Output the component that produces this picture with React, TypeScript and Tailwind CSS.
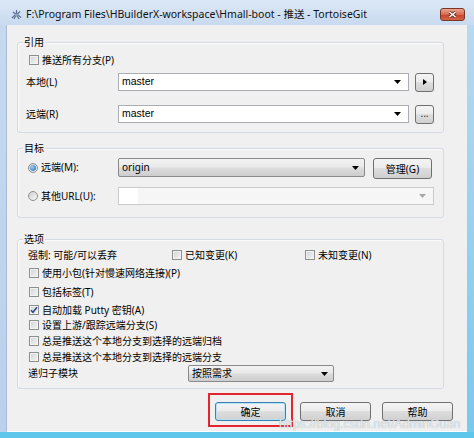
import React from "react";

const btnBase =
  "flex items-center justify-center rounded-[3px] border leading-[12px] bg-[linear-gradient(to_bottom,#f4f4f4_0%,#ececec_45%,#dedede_50%,#d0d0d0_100%)]";

function Arrow({ color = "#000" }: { color?: string }) {
  return (
    <svg width="7" height="4" viewBox="0 0 7 4">
      <path d="M0 0H7L3.5 4Z" fill={color} />
    </svg>
  );
}

function CheckBox({ checked = false }: { checked?: boolean }) {
  return (
    <span className="flex h-[10px] w-[10px] shrink-0 items-center justify-center border border-[#8e8f8f] bg-[linear-gradient(135deg,#cfd1d3,#f6f6f6)] shadow-[inset_0_0_0_1px_#f2f2f2]">
      {checked && (
        <svg width="8" height="8" viewBox="0 0 8 8">
          <path d="M1 4.2 3 6.3 7 1.3" fill="none" stroke="#2f4c8c" strokeWidth="1.6" />
        </svg>
      )}
    </span>
  );
}

function Radio({ checked = false }: { checked?: boolean }) {
  return (
    <span className="flex h-[10px] w-[10px] shrink-0 items-center justify-center rounded-full border border-[#8e8f8f] bg-[linear-gradient(135deg,#cdcfd1,#f8f8f8)]">
      {checked && (
        <span className="h-[6px] w-[6px] rounded-full bg-[radial-gradient(circle_at_35%_35%,#9fd2f6,#1f62b0)]" />
      )}
    </span>
  );
}

function Group({ title, className, children }: { title: string; className: string; children: React.ReactNode }) {
  return (
    <div className={"ml-[10px] w-[427px] rounded-[3px] border border-[#d5dbe0] shadow-[inset_1px_1px_0_#fbfbfb] " + className}>
      <div className="-mt-[8px] ml-[5px] h-[14px] w-fit bg-[#f0f0f0] px-[1px] leading-[14px]">{title}</div>
      {children}
    </div>
  );
}

function CheckRow({ label, checked = false, className }: { label: string; checked?: boolean; className: string }) {
  return (
    <div className={"flex h-[14px] items-center gap-[3px] pl-[11px] " + className}>
      <CheckBox checked={checked} />
      <span>{label}</span>
    </div>
  );
}

function EditCombo({ value, width }: { value: string; width: string }) {
  return (
    <div className={"flex h-[18px] items-center border border-[#abadb3] bg-white pl-[3px] pr-[7px] " + width}>
      <span className="flex-1 font-['Liberation_Sans',sans-serif] text-[10.5px]">{value}</span>
      <Arrow />
    </div>
  );
}

function ListCombo({ value, width, height }: { value: string; width: string; height: string }) {
  return (
    <div
      className={
        "flex items-center rounded-[2px] border border-[#8a8a8a] bg-[linear-gradient(to_bottom,#f3f3f3_0%,#e9e9e9_45%,#dcdcdc_55%,#cdcdcd_100%)] pl-[3px] pr-[5px] " +
        width +
        " " +
        height
      }
    >
      <span className="flex-1">{value}</span>
      <Arrow />
    </div>
  );
}

export default function App() {
  return (
    <div className="relative flex h-[438px] w-[474px] flex-col overflow-hidden bg-[#c4d7ee] font-['Noto_Sans','Noto_Sans_CJK_SC',sans-serif] text-[10px] text-black">
      {/* title bar */}
      <div className="flex h-[25px] items-center bg-[linear-gradient(to_bottom,#dce8f6,#c8daef)] pl-[10px] pt-[4px]">
        <svg width="13" height="11" viewBox="0 0 13 11" className="mr-[3px]">
          <path d="M2 9 5 6M4 10 6 6.5M7 6.5 9 10M8 6 11 8.5M6.5 5.5V1M3 3l3 2.5M10 2.5 7 5.5" stroke="#5a6f8e" strokeWidth="1.2" fill="none" />
          <circle cx="6.5" cy="6" r="1.6" fill="#8aa2c4" />
        </svg>
        <span className="text-[10.5px] text-[#111]">F:\Program Files\HBuilderX-workspace\Hmall-boot - 推送 - TortoiseGit</span>
        <div className="ml-auto mr-[9px] flex h-[13px] w-[25px] items-center justify-center rounded-[3px] border border-[#7c3424] bg-[linear-gradient(to_bottom,#eaa592_0%,#d86a50_50%,#c8452c_55%,#d4664a_100%)]">
          <svg width="9" height="7" viewBox="0 0 9 7">
            <path d="M1.5 1 7.5 6M7.5 1 1.5 6" stroke="#5a2418" strokeWidth="3" />
            <path d="M1.5 1 7.5 6M7.5 1 1.5 6" stroke="#fff" strokeWidth="1.6" />
          </svg>
        </div>
      </div>

      <div className="flex min-h-0 flex-1">
        <div className="w-[7px] border-r border-[#a8bcd8] bg-[linear-gradient(to_bottom,#c6d9ef,#bad0eb)]" />

        {/* client area */}
        <div className="flex flex-1 flex-col border-b border-white bg-[#f0f0f0] pt-[17px]">
          <Group title="引用" className="pb-[9px]">
            <CheckRow label="推送所有分支(P)" className="mt-[4px]" />
            <div className="mt-[6px] flex h-[18px] items-center">
              <span className="ml-[8px] w-[92px]">本地(L)</span>
              <EditCombo value="master" width="w-[291px]" />
              <div className={btnBase + " ml-[6px] h-[19px] w-[19px] border-[#707070]"}>
                <svg width="4" height="6" viewBox="0 0 4 6">
                  <path d="M0 0 4 3 0 6Z" fill="#000" />
                </svg>
              </div>
            </div>
            <div className="mt-[14px] flex h-[18px] items-center">
              <span className="ml-[8px] w-[92px]">远端(R)</span>
              <EditCombo value="master" width="w-[291px]" />
              <div className={btnBase + " ml-[6px] h-[19px] w-[19px] border-[#707070] pb-[3px] text-[#333]"}>...</div>
            </div>
          </Group>

          <Group title="目标" className="mt-[15px] pb-[12px]">
            <div className="mt-[3px] flex h-[21px] items-start">
              <div className="flex h-[19px] w-[100px] items-center gap-[3px] pl-[10px]">
                <Radio checked />
                <span>远端(M):</span>
              </div>
              <ListCombo value="origin" width="w-[247px]" height="h-[19px]" />
              <div className={btnBase + " ml-[8px] h-[21px] w-[59px] border-[#707070]"}>管理(G)</div>
            </div>
            <div className="mt-[8px] flex h-[18px] items-center">
              <div className="flex w-[100px] items-center gap-[3px] pl-[10px]">
                <Radio />
                <span>其他URL(U):</span>
              </div>
              <div className="flex h-[18px] w-[316px] items-center border border-[#c9cbcf] bg-[#f6f6f6] pr-[7px]">
                <span className="h-full w-[19px] bg-white" />
                <span className="flex-1" />
                <Arrow color="#a8a8a8" />
              </div>
            </div>
          </Group>

          <Group title="选项" className="mt-[21px] pb-[6px]">
            <div className="mt-[2px] flex h-[14px] items-center">
              <span className="w-[154px] pl-[10px]">强制: 可能/可以丢弃</span>
              <div className="flex w-[133px] items-center gap-[3px]">
                <CheckBox />
                <span>已知变更(K)</span>
              </div>
              <div className="flex items-center gap-[3px]">
                <CheckBox />
                <span>未知变更(N)</span>
              </div>
            </div>
            <CheckRow label="使用小包(针对慢速网络连接)(P)" className="mt-[4px]" />
            <CheckRow label="包括标签(T)" className="mt-[5px]" />
            <CheckRow label="自动加载 Putty 密钥(A)" checked className="mt-[4px]" />
            <CheckRow label="设置上游/跟踪远端分支(S)" className="mt-[1px]" />
            <CheckRow label="总是推送这个本地分支到选择的远端归档" className="mt-[2px]" />
            <CheckRow label="总是推送这个本地分支到选择的远端分支" className="mt-[2px]" />
            <div className="mt-[1px] flex h-[17px] items-center">
              <span className="w-[170px] pl-[10px]">递归子模块</span>
              <ListCombo value="按照需求" width="w-[146px]" height="h-[17px]" />
            </div>
          </Group>

          {/* dialog buttons */}
          <div className="mt-[4px] flex items-start justify-end pr-[14px]">
            <div className="border-2 border-[#e3262e] px-[5px] pb-[4px] pt-[7px]">
              <div className={btnBase + " h-[19px] w-[71px] border-[#3c7fb1] shadow-[inset_0_0_0_1px_#b4e2f8]"}>确定</div>
            </div>
            <div className={btnBase + " ml-[7px] mt-[9px] h-[19px] w-[71px] border-[#707070]"}>取消</div>
            <div className={btnBase + " ml-[11px] mt-[9px] h-[19px] w-[71px] border-[#707070]"}>帮助</div>
          </div>
        </div>

        <div className="w-[7px] bg-[linear-gradient(to_bottom,#b8d9f0,#78c9ee)]" />
      </div>
      <div className="h-[6px] bg-[#5ec6ea]" />

      {/* watermark */}
      <span className="absolute left-[279px] top-[418px] font-['Liberation_Sans',sans-serif] text-[12.5px] leading-none text-white/75 [text-shadow:0_0_1px_#8d9aa5]">
        https://blog.csdn.net/AdminGuan
      </span>
    </div>
  );
}
